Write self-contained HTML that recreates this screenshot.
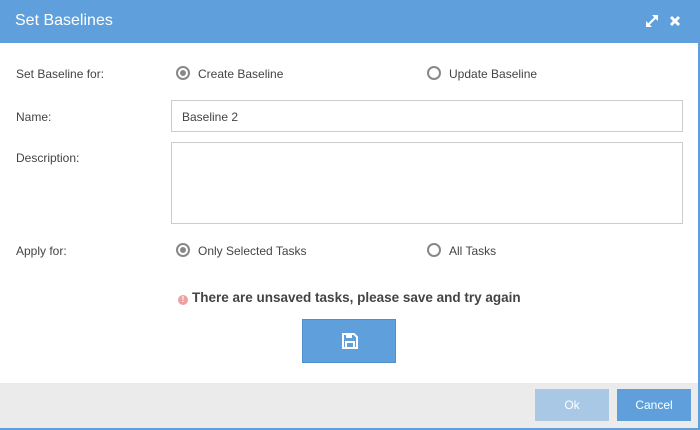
<!DOCTYPE html>
<html><head><style>
*{margin:0;padding:0;box-sizing:border-box}
body{width:700px;height:430px;background:#fff;font-family:"Liberation Sans",sans-serif;font-size:12px;color:#444;position:relative;overflow:hidden}
.hdr{position:absolute;left:0;top:0;width:700px;height:43px;background:#5fa0dc}
.hdr .t{position:absolute;left:15px;top:12px;color:#fff;font-size:16px}
.rb{position:absolute;right:0;top:0;width:2px;height:430px;background:#5fa0dc}
.lbl{position:absolute;left:16px;font-size:12px;color:#444}
.rad{position:absolute;font-size:12px;color:#444;padding-left:22px}
.rad:before{content:"";position:absolute;left:0;top:-1px;width:10px;height:10px;border:2px solid #888;border-radius:50%}
.rad.on:after{content:"";position:absolute;left:4px;top:3px;width:6px;height:6px;background:#888;border-radius:50%}
.inp{position:absolute;left:171px;width:512px;border:1px solid #ccc;background:#fff}
.msg{position:absolute;left:178px;top:290px;font-weight:bold;font-size:13.5px;color:#444}
.msg i{display:inline-block;width:10px;height:10px;border-radius:50%;background:#f0a0a0;color:#fff;font-style:normal;font-size:8px;text-align:center;line-height:10px;margin-right:4px;vertical-align:0}
.save{position:absolute;left:302px;top:319px;width:94px;height:44px;background:#5fa0dc;border:1px solid #4f90cc}
.ftr{position:absolute;left:0;top:383px;width:698px;height:45px;background:#ebebeb}
.bb{position:absolute;left:0;top:428px;width:700px;height:2px;background:#5fa0dc}
.btn{position:absolute;top:389px;height:32px;width:74px;color:#fff;text-align:center;line-height:32px;font-size:12px}
</style></head><body>
<div class="hdr"><div class="t">Set Baselines</div>
<svg style="position:absolute;left:645px;top:14px" width="14" height="14" viewBox="0 0 14 14"><path d="M3 11L11 3" stroke="#fff" stroke-width="2"/><path d="M7 1h6v6zM1 7v6h6z" fill="#fff"/></svg>
<svg style="position:absolute;left:669px;top:15px" width="12" height="12" viewBox="0 0 12 12"><path d="M2 2l8 8M10 2l-8 8" stroke="#fff" stroke-width="3"/></svg>
</div>
<div class="rb"></div>
<div class="lbl" style="top:67px">Set Baseline for:</div>
<div class="rad on" style="left:176px;top:67px">Create Baseline</div>
<div class="rad" style="left:427px;top:67px">Update Baseline</div>
<div class="lbl" style="top:110px">Name:</div>
<div class="inp" style="top:100px;height:32px;padding:9px 10px">Baseline 2</div>
<div class="lbl" style="top:151px">Description:</div>
<div class="inp" style="top:142px;height:82px"></div>
<div class="lbl" style="top:244px">Apply for:</div>
<div class="rad on" style="left:176px;top:244px">Only Selected Tasks</div>
<div class="rad" style="left:427px;top:244px">All Tasks</div>
<div class="msg"><i>!</i>There are unsaved tasks, please save and try again</div>
<div class="save"><svg style="position:absolute;left:38px;top:12px" width="18" height="18" viewBox="0 0 18 18"><path d="M2 2h11l3 3v11H2z" stroke="#fff" stroke-width="2" fill="none"/><path d="M5 2h6v4H5z" fill="#fff"/><path d="M5 10h8v6H5z" stroke="#fff" stroke-width="2" fill="none"/></svg></div>
<div class="ftr"></div>
<div class="bb"></div>
<div class="btn" style="left:535px;background:#a8c8e6">Ok</div>
<div class="btn" style="left:617px;background:#5fa0dc">Cancel</div>
</body></html>
